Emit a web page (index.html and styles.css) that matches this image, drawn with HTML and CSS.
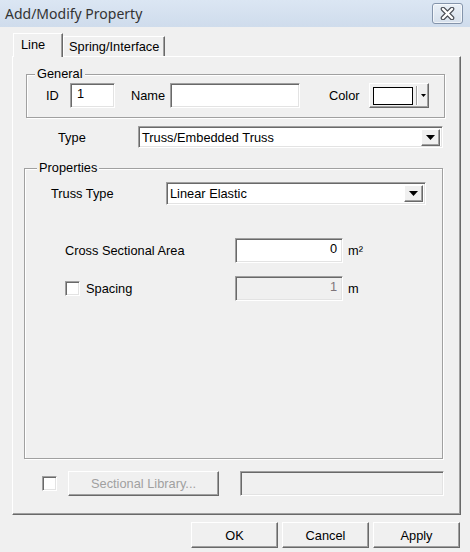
FILE: index.html
```html
<!DOCTYPE html>
<html lang="en">
<head>
  <meta charset="UTF-8" />
  <title>Add/Modify Property</title>
  <link rel="stylesheet" href="styles.css">
</head>
<body>

  <div class="window">
    <div class="titlebar">
      <span class="title">Add/Modify Property</span>
      <div class="close">
        <svg width="17" height="13" viewBox="0 0 17 13">
          <path d="M4 2 L13 11 M13 2 L4 11" stroke="#4b4f57" stroke-width="4.6" stroke-linecap="round" fill="none"/>
          <path d="M4 2 L13 11 M13 2 L4 11" stroke="#fff" stroke-width="2.4" stroke-linecap="round" fill="none"/>
        </svg>
      </div>
    </div>

    <div class="tabs">
      <div class="tab active">Line</div>
      <div class="tab">Spring/Interface</div>
    </div>

    <div class="panel">
      <div class="group general">
        <span class="legend">General</span>
        <div class="row">
          <span class="lbl lbl-id">ID</span>
          <div class="field w-id">1</div>
          <span class="lbl lbl-name">Name</span>
          <div class="field w-name"></div>
          <span class="lbl lbl-color">Color</span>
          <div class="colorbtn">
            <span class="swatch"></span>
            <span class="sep"></span>
            <svg width="5" height="3" viewBox="0 0 5 3"><polygon points="0,0 5,0 2.5,3" fill="#000"/></svg>
          </div>
        </div>
      </div>

      <div class="row type-row">
        <span class="lbl lbl-type">Type</span>
        <div class="select w-type">
          <span class="value">Truss/Embedded Truss</span>
          <span class="arrow"><svg width="9" height="5" viewBox="0 0 9 5"><polygon points="0,0 9,0 4.5,5" fill="#000"/></svg></span>
        </div>
      </div>

      <div class="group props">
        <span class="legend">Properties</span>
        <div class="row truss-row">
          <span class="lbl lbl-truss">Truss Type</span>
          <div class="select w-truss">
            <span class="value">Linear Elastic</span>
            <span class="arrow"><svg width="9" height="5" viewBox="0 0 9 5"><polygon points="0,0 9,0 4.5,5" fill="#000"/></svg></span>
          </div>
        </div>
        <div class="row area-row">
          <span class="lbl lbl-area">Cross Sectional Area</span>
          <div class="field num">0</div>
          <span class="unit">m²</span>
        </div>
        <div class="row spacing-row">
          <span class="check"></span>
          <span class="lbl lbl-spacing">Spacing</span>
          <div class="field num disabled">1</div>
          <span class="unit">m</span>
        </div>
      </div>

      <div class="row lib-row">
        <span class="check"></span>
        <div class="btn lib-btn">Sectional Library...</div>
        <div class="field disabled lib-field"></div>
      </div>
    </div>

    <div class="actions">
      <div class="btn">OK</div>
      <div class="btn">Cancel</div>
      <div class="btn">Apply</div>
    </div>
  </div>

</body>
</html>
```

FILE: styles.css
```css
body {
  margin: 0;
  background: #f0f0f0;
  font-family: "Liberation Sans", Arial, sans-serif;
  font-size: 12.8px;
  color: #000;
}

.window {
  width: 470px;
  height: 552px;
  overflow: hidden;
}

/* title bar */
.titlebar {
  height: 27px;
  display: flex;
  align-items: flex-start;
  justify-content: space-between;
  background: linear-gradient(#dbe6f3, #cfdcec);
}

.title {
  font-family: "Noto Sans", sans-serif;
  font-size: 14px;
  color: #333;
  padding-left: 5px;
  line-height: 27px;
}

.close {
  margin: 3px 7px 0 0;
  width: 29px;
  height: 19px;
  border: 1px solid #8494ab;
  border-radius: 3px;
  background: linear-gradient(#eaf0f7, #d6e0ec);
  box-shadow: inset 0 0 0 1px rgba(255,255,255,0.6);
  display: flex;
  align-items: center;
  justify-content: center;
}

/* tabs */
.tabs {
  display: flex;
  align-items: flex-end;
  height: 23px;
  margin-top: 6px;
  padding-left: 13px;
}

.tab {
  box-sizing: border-box;
  height: 20px;
  padding: 0 5px;
  line-height: 19px;
  border-top: 1px solid #fff;
  border-left: 1px solid #fff;
  border-right: 1px solid #696969;
  box-shadow: inset -1px 0 0 #a0a0a0;
}

.tab.active {
  position: relative;
  z-index: 1;
  height: 24px;
  width: 50px;
  margin-bottom: -1px;
  padding-left: 7px;
  line-height: 22px;
  background: #f0f0f0;
}

/* tab page */
.panel {
  box-sizing: border-box;
  width: 449px;
  height: 459px;
  margin-left: 12px;
  border-top: 1px solid #fff;
  border-left: 1px solid #fff;
  border-right: 1px solid #696969;
  border-bottom: 1px solid #696969;
  box-shadow: inset -1px -1px 0 #a0a0a0;
}

.row {
  display: flex;
  align-items: center;
}

.group {
  position: relative;
  box-sizing: border-box;
  border: 1px solid #a0a0a0;
  box-shadow: 1px 1px 0 #fff, inset 1px 1px 0 #fff;
}

.legend {
  position: absolute;
  top: -9px;
  left: 8px;
  padding: 0 2px;
  line-height: 15px;
  background: #f0f0f0;
}

.props .legend {
  left: 12px;
}

.general {
  width: 419px;
  height: 44px;
  margin: 17px 0 0 13px;
}

.general .row {
  padding: 8px 0 0 19px;
}

.lbl-id { width: 24px; }
.lbl-name { width: 39px; margin-left: 16px; }
.lbl-color { width: 40px; margin-left: 29px; }

/* sunken edit box */
.field {
  box-sizing: border-box;
  height: 25px;
  padding: 2px 4px;
  background: #fff;
  border: 1px solid;
  border-color: #a0a0a0 #fff #fff #a0a0a0;
  box-shadow: inset 1px 1px 0 #696969, inset -1px -1px 0 #e3e3e3;
  line-height: 15px;
}

.w-id { width: 45px; padding-left: 6px; }
.w-name { width: 130px; }

.field.num {
  width: 108px;
  text-align: right;
  padding-right: 5px;
}

.field.disabled {
  background: #f0f0f0;
  color: #7d7479;
}

.colorbtn {
  box-sizing: border-box;
  width: 60px;
  height: 25px;
  display: flex;
  align-items: center;
  padding-left: 3px;
  border: 1px solid;
  border-color: #fff #696969 #696969 #fff;
  box-shadow: inset -1px -1px 0 #a0a0a0;
}

.swatch {
  width: 38px;
  height: 16px;
  background: #fff;
  border: 1px solid #000;
}

.sep {
  width: 1px;
  height: 19px;
  margin: 0 3px 0 3px;
  background: #a0a0a0;
  box-shadow: 1px 0 0 #fff;
}

.colorbtn svg {
  margin-left: 1px;
}

/* combo box */
.select {
  box-sizing: border-box;
  display: flex;
  align-items: center;
  justify-content: space-between;
  background: #fff;
  border: 1px solid;
  border-color: #a0a0a0 #fff #fff #a0a0a0;
  box-shadow: inset 1px 1px 0 #696969, inset -1px -1px 0 #e3e3e3;
  padding: 2px 2px 2px 3px;
}

.select .arrow {
  box-sizing: border-box;
  width: 19px;
  height: 17px;
  display: flex;
  align-items: center;
  justify-content: center;
  background: #f0f0f0;
  border: 1px solid;
  border-color: #fff #696969 #696969 #fff;
  box-shadow: inset -1px -1px 0 #a0a0a0;
}

.type-row {
  margin-top: 8px;
  padding-left: 45px;
}

.lbl-type { width: 80px; }
.w-type { width: 305px; height: 22px; }

.props {
  width: 419px;
  height: 291px;
  margin: 20px 0 0 11px;
}

.truss-row {
  margin-top: 13px;
  padding-left: 26px;
}

.lbl-truss { width: 115px; }
.w-truss { width: 260px; height: 23px; }

.area-row {
  margin-top: 33px;
  padding-left: 40px;
}

.lbl-area { width: 170px; }

.unit {
  margin-left: 5px;
}

.spacing-row {
  margin-top: 13px;
  padding-left: 40px;
}

.check {
  box-sizing: border-box;
  width: 15px;
  height: 15px;
  background: #fff;
  border: 1px solid;
  border-color: #a0a0a0 #fff #fff #a0a0a0;
  box-shadow: inset 1px 1px 0 #696969, inset -1px -1px 0 #e3e3e3;
}

.lbl-spacing {
  width: 149px;
  margin-left: 6px;
}

/* raised push button */
.btn {
  box-sizing: border-box;
  width: 87px;
  height: 26px;
  display: flex;
  align-items: center;
  justify-content: center;
  border: 1px solid;
  border-color: #fff #696969 #696969 #fff;
  box-shadow: inset -1px -1px 0 #a0a0a0;
}

.lib-row {
  margin-top: 12px;
  padding-left: 29px;
}

.lib-btn {
  width: 151px;
  height: 25px;
  margin-left: 11px;
  color: #a0a0a0;
}

.lib-field {
  width: 204px;
  margin-left: 21px;
}

.actions {
  display: flex;
  justify-content: flex-end;
  gap: 4px;
  margin-top: 7px;
  padding-right: 10px;
}
```
